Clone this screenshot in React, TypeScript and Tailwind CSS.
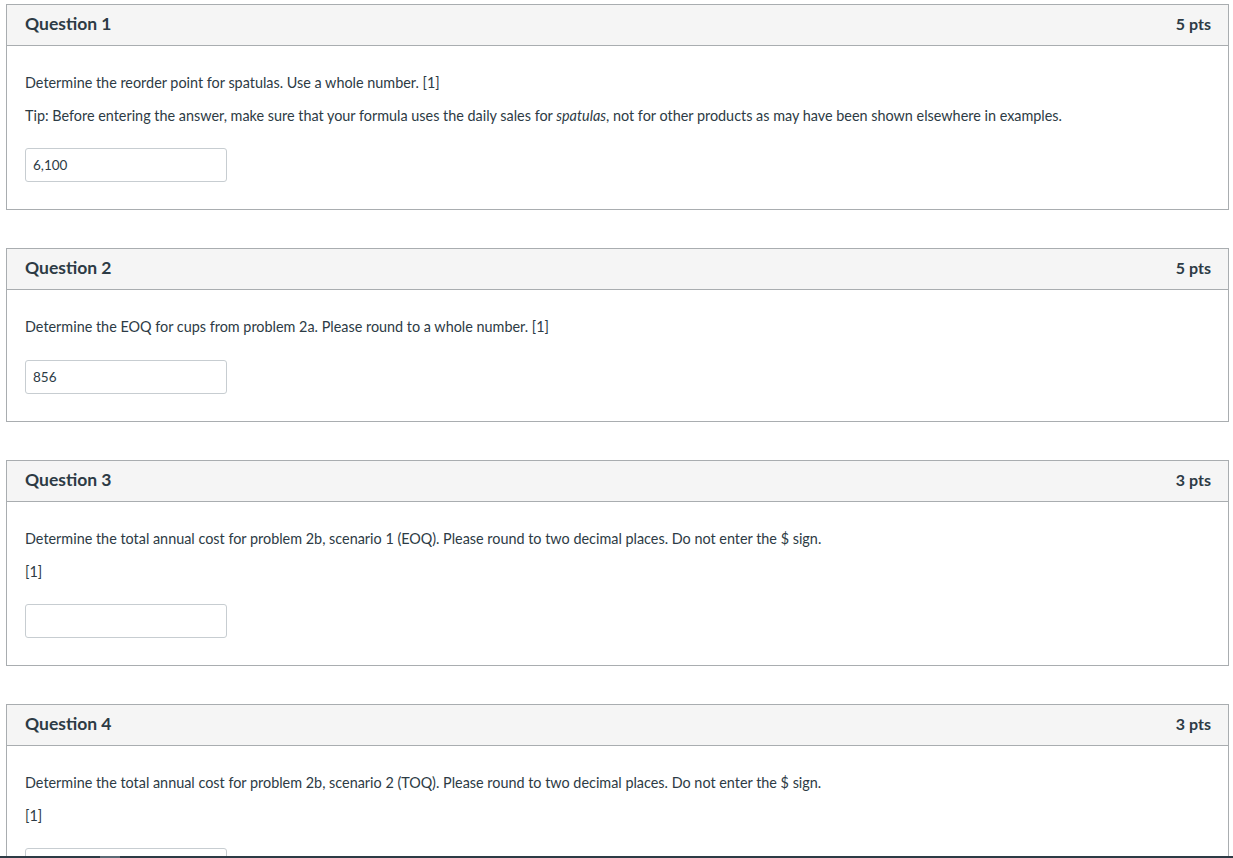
import React from "react";

type Q = { title: string; pts: string; paras: React.ReactNode[]; value: string };

const questions: Q[] = [
  {
    title: "Question 1",
    pts: "5 pts",
    paras: [
      "Determine the reorder point for spatulas. Use a whole number. [1]",
      <>
        Tip: Before entering the answer, make sure that your formula uses the daily sales for <em>spatulas</em>, not
        for other products as may have been shown elsewhere in examples.
      </>,
    ],
    value: "6,100",
  },
  {
    title: "Question 2",
    pts: "5 pts",
    paras: ["Determine the EOQ for cups from problem 2a. Please round to a whole number. [1]"],
    value: "856",
  },
  {
    title: "Question 3",
    pts: "3 pts",
    paras: [
      "Determine the total annual cost for problem 2b, scenario 1 (EOQ). Please round to two decimal places. Do not enter the $ sign.",
      "[1]",
    ],
    value: "",
  },
  {
    title: "Question 4",
    pts: "3 pts",
    paras: [
      "Determine the total annual cost for problem 2b, scenario 2 (TOQ). Please round to two decimal places. Do not enter the $ sign.",
      "[1]",
    ],
    value: "",
  },
];

function Card({ q }: { q: Q }) {
  return (
    <div className="border border-[#a9adb0] bg-white">
      <div className="flex h-[41px] items-center justify-between border-b border-[#a9adb0] bg-[#f5f5f5] pb-[2px] pl-[18px] pr-[17px] font-bold text-[#2d3b45]">
        <span className="text-[17.5px] leading-[24px]">{q.title}</span>
        <span className="text-[16px] leading-[24px]">{q.pts}</span>
      </div>
      <div className="flex flex-col pl-[18px] pr-[17px] pt-[27px] pb-[27px] text-[14.4px] leading-[20px] text-[#2d3b45]">
        {q.paras.map((p, i) => (
          <p key={i} className={i > 0 ? "mt-[13px]" : ""}>
            {p}
          </p>
        ))}
        <div
          className={
            (q.paras.length > 1 ? "mt-[22px] " : "mt-[23px] ") +
            "flex h-[34px] w-[202px] items-center rounded-[3px] border border-[#c7cdd1] bg-white px-[7px] text-[13.5px] text-[#2d3b45]"
          }
        >
          {q.value}
        </div>
      </div>
    </div>
  );
}

export default function App() {
  return (
    <div
      className="min-h-[858px] bg-white"
      style={{ fontFamily: "Lato, 'Helvetica Neue', Arial, sans-serif" }}
    >
      <div className="ml-[6px] mr-[4px] flex flex-col gap-[38px] pt-[4px] pb-[40px]">
        {questions.map((q) => (
          <Card key={q.title} q={q} />
        ))}
      </div>
      <div className="fixed bottom-0 left-0 right-0 flex h-[2px] bg-[#2d3b45]">
        <div className="ml-[100px] w-[20px] bg-[#5a6a75]" />
      </div>
    </div>
  );
}
